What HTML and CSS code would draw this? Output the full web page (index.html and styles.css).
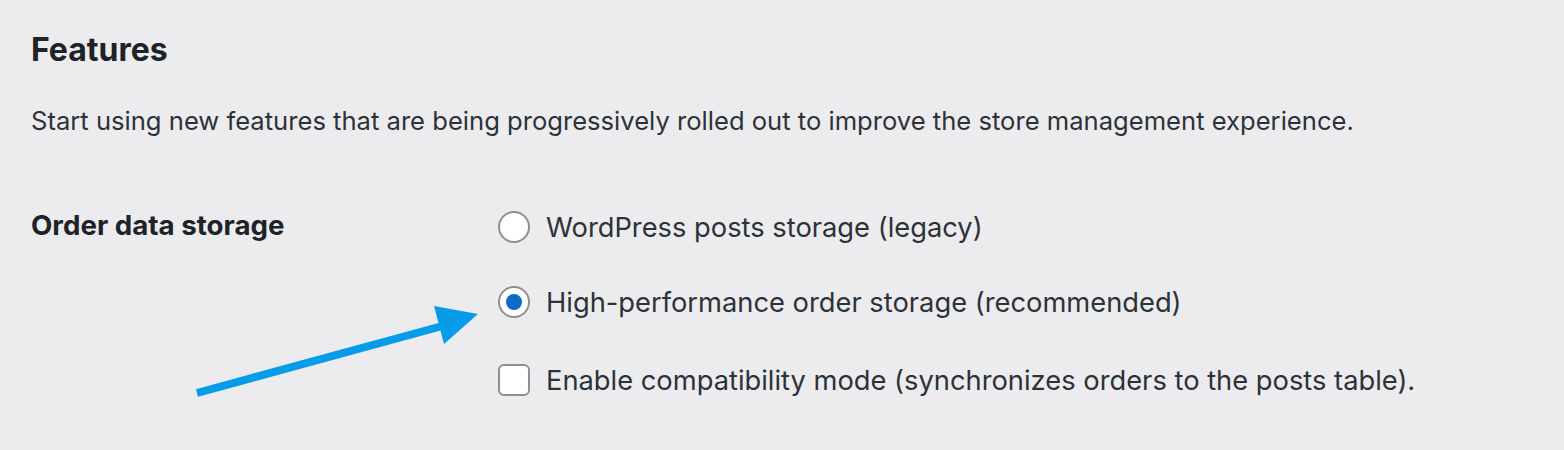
FILE: index.html
```html
<!DOCTYPE html>
<html lang="en">
<head>
<meta charset="utf-8">
<title>Features</title>
<link rel="stylesheet" href="styles.css">
</head>
<body>
<main class="page">
  <h2 class="title">Features</h2>
  <p class="desc">Start using new features that are being progressively rolled out to improve the store management experience.</p>
  <div class="setting">
    <div class="label">Order data storage</div>
    <div class="options">
      <label class="option"><span class="radio"></span><span class="opt-text">WordPress posts storage (legacy)</span></label>
      <label class="option"><span class="radio checked"></span><span class="opt-text">High-performance order storage (recommended)</span></label>
      <label class="option compat"><span class="checkbox"></span><span class="opt-text">Enable compatibility mode (synchronizes orders to the posts table).</span></label>
    </div>
  </div>
</main>
<svg class="arrow" width="1564" height="450" viewBox="0 0 1564 450" aria-hidden="true">
  <line x1="197" y1="393" x2="446" y2="325" stroke="#069ce9" stroke-width="8"/>
  <polygon points="434,306 478,314 444,344" fill="#069ce9"/>
</svg>
</body>
</html>
```
FILE: styles.css
```css
html, body {
  margin: 0;
  padding: 0;
  background: #ececee;
}
body {
  width: 1564px;
  height: 450px;
  overflow: hidden;
  position: relative;
  font-family: Inter, "Noto Sans", "Liberation Sans", sans-serif;
  color: #2c3338;
}
.page {
  padding: 30px 0 0 31px;
}
.title {
  margin: 0;
  font-size: 32px;
  line-height: 40px;
  font-weight: 700;
  color: #1d2327;
}
.desc {
  margin: 33px 0 0;
  font-size: 25.6px;
  line-height: 36px;
}
.setting {
  display: grid;
  grid-template-columns: 467px 1fr;
  margin-top: 66px;
}
.label {
  font-size: 27.7px;
  line-height: 40px;
  font-weight: 700;
  color: #1d2327;
  margin-top: 0;
}
.options {
  display: flex;
  flex-direction: column;
  gap: 35px;
  padding-top: 2px;
}
.option {
  display: flex;
  align-items: center;
  gap: 16px;
  height: 40px;
  font-size: 27.3px;
}
.compat {
  margin-top: 3px;
}
.radio {
  box-sizing: border-box;
  width: 32px;
  height: 32px;
  border: 2px solid #8c8f94;
  border-radius: 50%;
  background: #fff;
  display: flex;
  align-items: center;
  justify-content: center;
}
.radio.checked::after {
  content: "";
  width: 16px;
  height: 16px;
  border-radius: 50%;
  background: #0a6cc6;
}
.checkbox {
  box-sizing: border-box;
  width: 32px;
  height: 32px;
  border: 2px solid #8c8f94;
  border-radius: 6px;
  background: #fff;
}
.arrow {
  position: absolute;
  left: 0;
  top: 0;
  pointer-events: none;
}
```
